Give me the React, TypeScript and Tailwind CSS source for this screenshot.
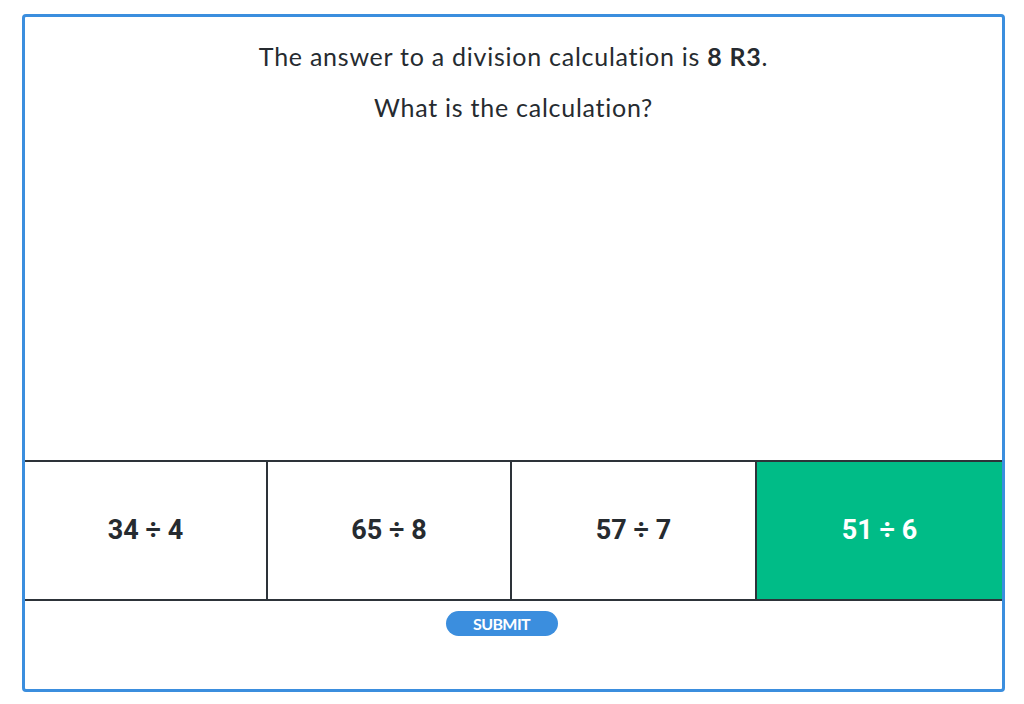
import React from "react";

const options = [
  { label: "34 ÷ 4", cls: "w-[243px] border-r-2 border-[#2d3339] text-[#262b30]" },
  { label: "65 ÷ 8", cls: "w-[244px] border-r-2 border-[#2d3339] text-[#262b30]" },
  { label: "57 ÷ 7", cls: "w-[245px] border-r-2 border-[#2d3339] text-[#262b30]" },
  { label: "51 ÷ 6", cls: "flex-1 bg-[#00bc87] text-white" },
];

export default function App() {
  return (
    <div className="w-[1024px] h-[704px] bg-white pt-[14px] pl-[22px]" style={{ fontFamily: "Lato, 'Open Sans', sans-serif" }}>
      <div className="w-[983px] h-[678px] border-[3px] border-[#3b8ede] rounded-[4px] flex flex-col">
        <div className="h-[443px] flex flex-col items-center pt-[23px] text-[#262b30] text-[25px] tracking-[0.75px]">
          <p className="leading-[32px]">
            The answer to a division calculation is <span className="font-bold">8 R3</span>.
          </p>
          <p className="leading-[32px] mt-[19px]">What is the calculation?</p>
        </div>
        <div className="flex h-[141px] border-y-2 border-[#2d3339]">
          {options.map((o) => (
            <div
              key={o.label}
              className={"flex items-center justify-center font-bold text-[27px] " + o.cls}
              style={{ fontFamily: "Roboto, sans-serif" }}
            >
              {o.label}
            </div>
          ))}
        </div>
        <div className="flex justify-center pt-[10px] pr-[24px]">
          <button
            className="w-[112px] h-[25px] rounded-full bg-[#3b8ede] text-white font-bold text-[16px] tracking-[-0.6px] leading-none"
            style={{ fontFamily: "Lato, sans-serif" }}
          >
            SUBMIT
          </button>
        </div>
      </div>
    </div>
  );
}
